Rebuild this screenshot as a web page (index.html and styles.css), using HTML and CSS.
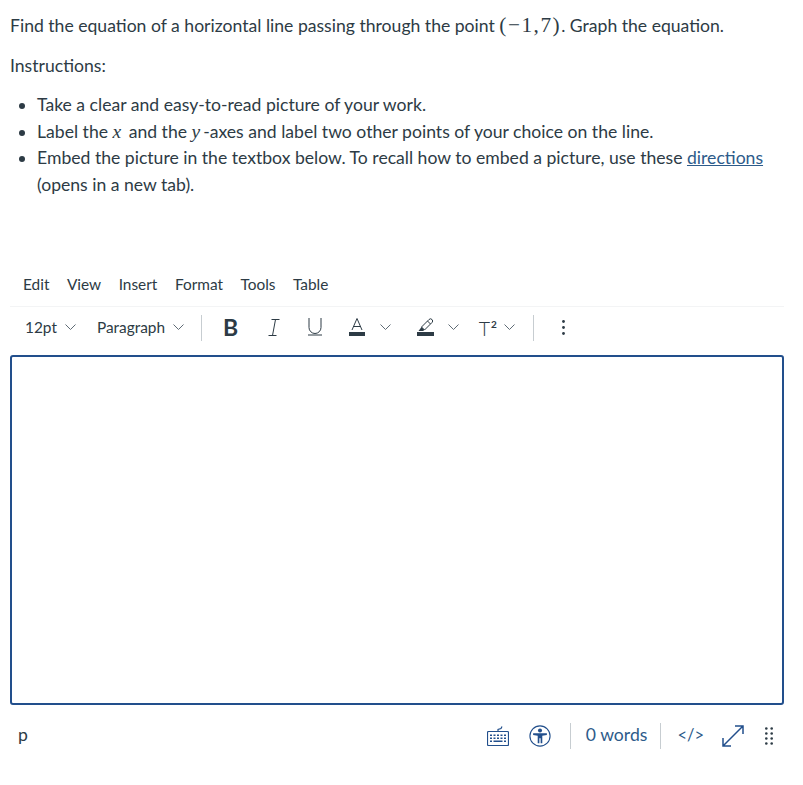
FILE: index.html
```html
<!DOCTYPE html>
<html lang="en">
<head>
    <meta charset="UTF-8">
    <meta name="viewport" content="width=device-width, initial-scale=1.0">
    <title>Graph the equation</title>
    <link rel="stylesheet" href="styles.css">
</head>
<body>
    <div class="question">
        <p class="prompt">Find the equation of a horizontal line passing through the point <span class="math math-big">(−1,7)</span>. Graph the equation.</p>
        <p class="prompt">Instructions:</p>
        <ul class="steps">
            <li>Take a clear and easy-to-read picture of your work.</li>
            <li>Label the <i class="math math-var">x</i> and the <i class="math math-var">y</i>-axes and label two other points of your choice on the line.</li>
            <li>Embed the picture in the textbox below. To recall how to embed a picture, use these <a href="#">directions</a> (opens in a new tab).</li>
        </ul>
    </div>

    <div class="editor">
        <div class="menubar">
            <span>Edit</span>
            <span>View</span>
            <span>Insert</span>
            <span>Format</span>
            <span>Tools</span>
            <span>Table</span>
        </div>

        <div class="toolbar">
            <span class="tool">12pt
                <svg class="chev" viewBox="0.500 0.500 11 6"><path d="M1 1l5 5 5-5"/></svg>
            </span>
            <span class="tool tool-block">Paragraph
                <svg class="chev" viewBox="0.500 0.500 11 6"><path d="M1 1l5 5 5-5"/></svg>
            </span>
            <span class="divider divider-block"></span>
            <span class="fmt-b">B</span>
            <svg class="fmt-i" viewBox="0 0 12 17"><path d="M3.500 0.500h8M0.500 16.500h8M7.500 0.500l-3 16"/></svg>
            <svg class="fmt-u" viewBox="0 0 14 18"><path d="M1 0v9.500a6 6 0 0 0 12 0V0M0 17h14"/></svg>
            <span class="color-btn">
                <svg class="color-a" viewBox="0 0 16 18"><path class="thin" d="M3 12L8 0.500 13 12M4.500 8.500h7"/><rect y="14" width="16" height="4"/></svg>
                <svg class="chev" viewBox="0.500 0.500 11 6"><path d="M1 1l5 5 5-5"/></svg>
            </span>
            <span class="color-btn color-btn-hl">
                <svg class="color-b" viewBox="0 0 17 18"><path class="thin" d="M4.500 9l7.500-7.500a1.500 1.500 0 0 1 3 3L7.500 12zM10.500 3l3 3"/><path d="M4.500 9l3 3-1.500 1H1.500z"/><rect y="14" width="17" height="4"/></svg>
                <svg class="chev" viewBox="0.500 0.500 11 6"><path d="M1 1l5 5 5-5"/></svg>
            </span>
            <span class="sup"><span class="sup-t">T</span><b>2</b>
                <svg class="chev" viewBox="0.500 0.500 11 6"><path d="M1 1l5 5 5-5"/></svg>
            </span>
            <span class="divider"></span>
            <svg class="more" viewBox="0 0 3 15"><circle cx="1.500" cy="1.500" r="1.400"/><circle cx="1.500" cy="7.500" r="1.400"/><circle cx="1.500" cy="13.500" r="1.400"/></svg>
        </div>

        <div class="textbox"></div>

        <div class="statusbar">
            <span class="path">p</span>
            <svg class="kbd" viewBox="0 0 22 20">
                <path class="line" d="M1.500 5.500h19a1 1 0 0 1 1 1v12a1 1 0 0 1-1 1h-19a1 1 0 0 1-1-1v-12a1 1 0 0 1 1-1zM11 5.500v-2l3-1 1-2"/>
                <path class="keys" d="M3 8.500h2V10H3zM6.500 8.500h2V10h-2zM10 8.500h2V10h-2zM13.500 8.500h2V10h-2zM17 8.500h2V10h-2zM3 11.500h2V13H3zM6.500 11.500h2V13h-2zM10 11.500h2V13h-2zM13.500 11.500h2V13h-2zM17 11.500h2V13h-2zM3 14.500h2V16H3zM6.500 14.500h9V16h-9zM17 14.500h2V16h-2z"/>
            </svg>
            <svg class="a11y" viewBox="0 0 24 24">
                <circle class="line" cx="12" cy="12" r="11"/>
                <circle class="keys" cx="12" cy="6" r="2.200"/>
                <path class="keys" d="M4.500 9h15v1.800l-5 1V20h-1.800v-5.500h-1.400V20H9.500v-8.200l-5-1z"/>
            </svg>
            <span class="divider divider-a11y"></span>
            <span class="words">0 words</span>
            <span class="divider divider-words"></span>
            <span class="html-btn">&lt;/&gt;</span>
            <svg class="expand" viewBox="0 0 22 22"><path d="M1 21L21 1M13 1h8v8M1 13v8h8"/></svg>
            <svg class="grip" viewBox="0 0 8 18">
                <circle cx="1.300" cy="1.500" r="1.300"/><circle cx="6.700" cy="1.500" r="1.300"/>
                <circle cx="1.300" cy="6.500" r="1.300"/><circle cx="6.700" cy="6.500" r="1.300"/>
                <circle cx="1.300" cy="11.500" r="1.300"/><circle cx="6.700" cy="11.500" r="1.300"/>
                <circle cx="1.300" cy="16.500" r="1.300"/><circle cx="6.700" cy="16.500" r="1.300"/>
            </svg>
        </div>
    </div>
</body>
</html>
```

FILE: styles.css
```css
body {
    margin: 0;
    font-family: "Lato", sans-serif;
    font-size: 17.6px;
    line-height: 26.4px;
    color: #2d3b45;
    background-color: #fff;
}

.question {
    padding: 13px 10px 0;
    height: 253px;
    box-sizing: border-box;
}

.prompt {
    margin: 0 0 13.3px;
}

.steps {
    margin: 0;
    padding-left: 27px;
}

.steps a {
    color: #2d5b8a;
}

.math {
    font-family: "Liberation Serif", serif;
    line-height: 0;
}

.math-big {
    font-size: 21.3px;
    letter-spacing: 1.5px;
}

.math-var {
    font-size: 19.5px;
    letter-spacing: 3px;
}

/* editor */
.editor {
    padding: 0 19px 0 10px;
}

.menubar {
    display: flex;
    gap: 17.5px;
    height: 54px;
    padding: 17px 13px 0;
    box-sizing: border-box;
    font-size: 15.4px;
    line-height: 28px;
    border-bottom: 1px solid #f3f4f5;
}

.toolbar {
    display: flex;
    align-items: center;
    height: 48px;
    padding: 0 0 8px 15px;
    box-sizing: border-box;
    font-size: 15.4px;
}

.chev {
    width: 11px;
    height: 6px;
    fill: none;
    stroke: #5f6b75;
    stroke-width: 1;
}

.tool {
    display: flex;
    align-items: center;
    gap: 8px;
}

.tool-block {
    margin-left: 21px;
}

.divider {
    width: 1px;
    height: 26px;
    margin: 2px 0 0 18px;
    background-color: #c7cdd1;
}

.divider-block {
    margin-left: 17px;
}

.fmt-b {
    margin-left: 21px;
    font-size: 23px;
    font-weight: 700;
}

.fmt-i {
    width: 12px;
    height: 17px;
    margin-left: 29.5px;
    fill: none;
    stroke: #2d3b45;
    stroke-width: 1;
}

.fmt-u {
    width: 14px;
    height: 18px;
    margin-left: 28px;
    fill: none;
    stroke: #2d3b45;
    stroke-width: 1;
}

.color-btn {
    display: flex;
    align-items: center;
    gap: 15px;
    margin-left: 27px;
}

.color-btn-hl {
    gap: 14px;
    margin-left: 26px;
}

.color-a,
.color-b {
    width: 16px;
    height: 18px;
    fill: #2d3b45;
    stroke: none;
}

.color-b {
    width: 17px;
}

.color-a .thin,
.color-b .thin {
    fill: none;
    stroke: #2d3b45;
    stroke-width: 1;
}

.sup {
    display: flex;
    align-items: center;
    margin-left: 20px;
}

.sup-t {
    margin-top: 4px;
    font-size: 19.5px;
    font-weight: 300;
}

.sup b {
    margin: 0 7px 6px 1px;
    font-size: 10px;
    line-height: 14px;
}

.more {
    width: 3px;
    height: 15px;
    margin-left: 28px;
    fill: #2d3b45;
}

.textbox {
    height: 350px;
    border: 2px solid #224f8c;
    border-radius: 3px;
    box-sizing: border-box;
}

.statusbar {
    display: flex;
    align-items: center;
    height: 60px;
    padding-left: 8px;
    color: #2d5b8a;
}

.path {
    margin-right: auto;
    color: #2d3b45;
}

.line {
    fill: none;
    stroke: #224f8c;
    stroke-width: 1.2;
}

.keys {
    fill: #224f8c;
}

.kbd {
    width: 22px;
    height: 20px;
    margin-top: 2px;
}

.a11y {
    width: 22px;
    height: 22px;
    margin: 2px 0 0 20px;
}

.divider-a11y {
    margin-left: 19px;
}

.words {
    margin-left: 15px;
}

.divider-words {
    margin-left: 13px;
}

.html-btn {
    margin-left: 16px;
    font-size: 16.5px;
}

.expand {
    width: 22px;
    height: 22px;
    margin: 2px 0 0 18px;
    fill: none;
    stroke: #224f8c;
    stroke-width: 1.5;
}

.grip {
    width: 8px;
    height: 18px;
    margin: 2px 11px 0 21px;
    fill: #2d3b45;
}
```
